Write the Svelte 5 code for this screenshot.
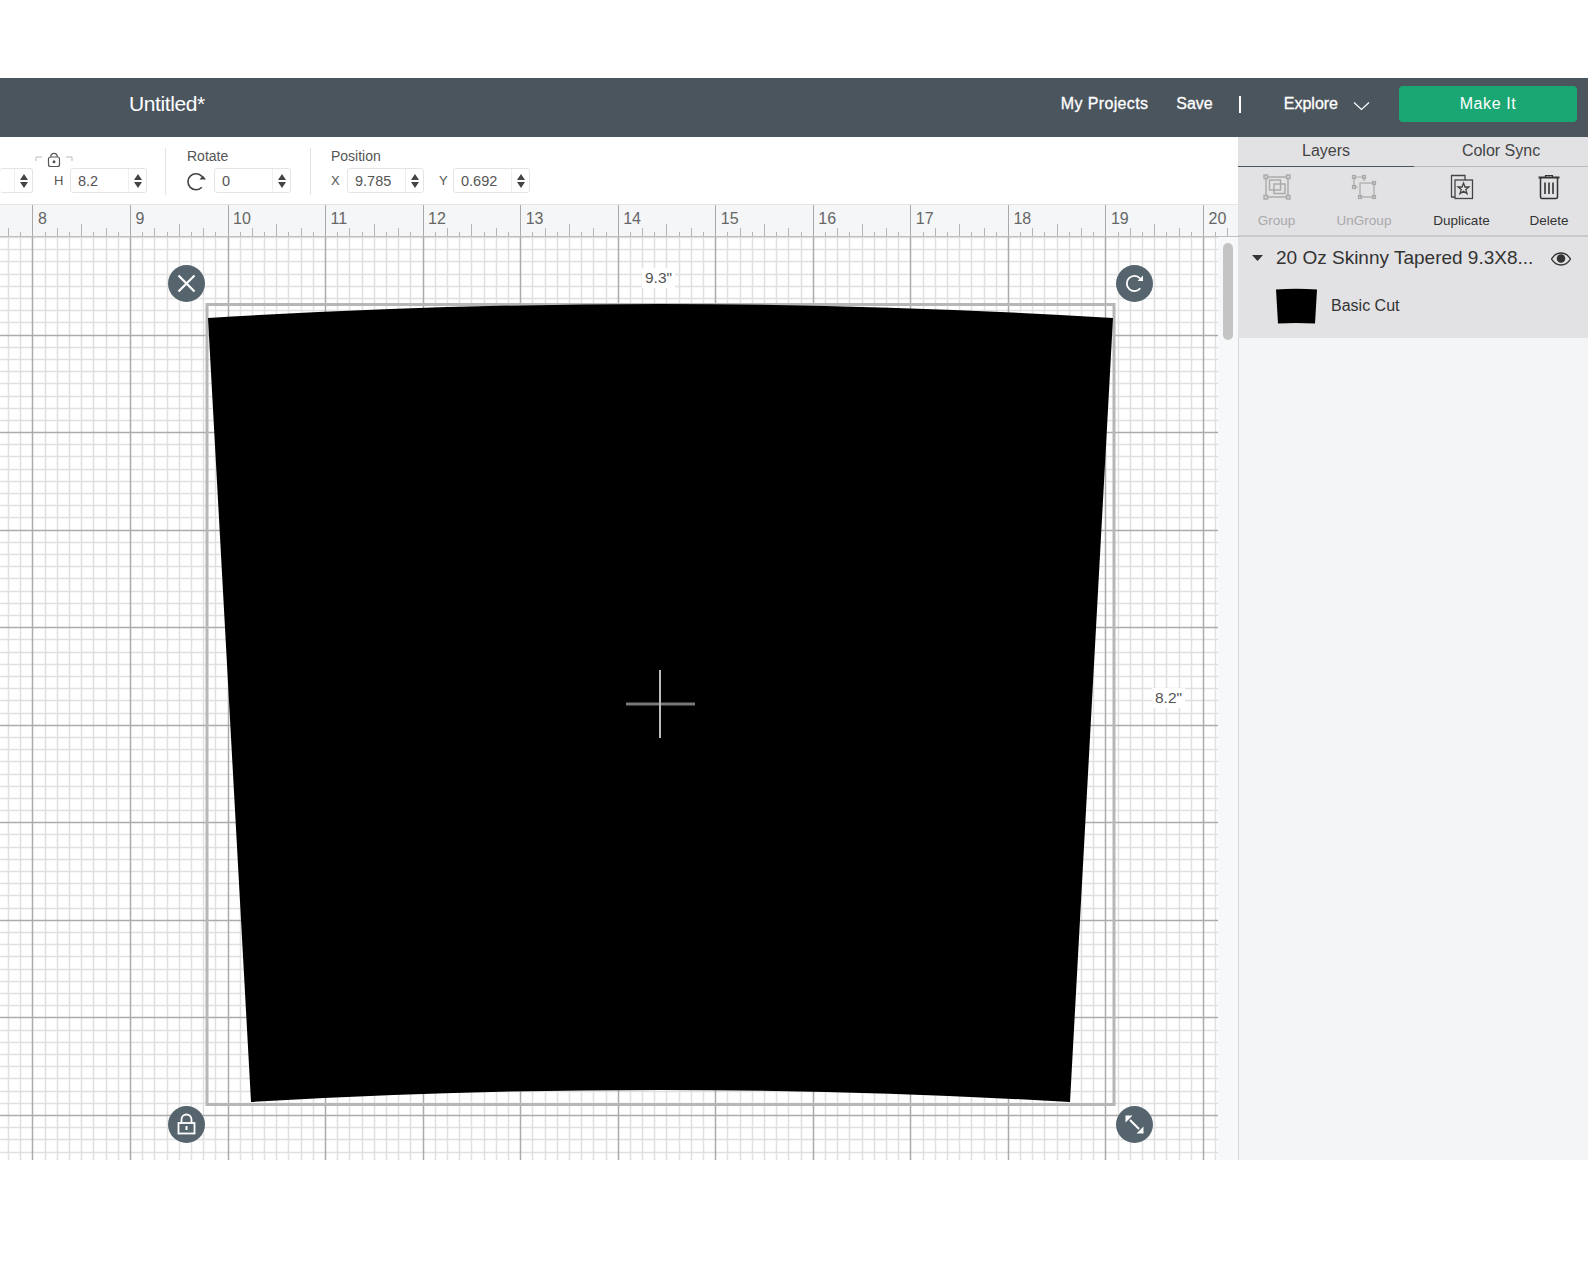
<script>
	const UNIT = 97.55;
	const ORIGIN_X = 32.4;
	const WIDTH = 1218;
	const HEIGHT = 923;

	// every inch is cut in eight on both axes
	const columns = [];
	for (let i = -2; ORIGIN_X + (i * UNIT) / 8 < WIDTH; i++) {
		columns.push({ x: Math.round(ORIGIN_X + (i * UNIT) / 8) + 0.5, major: i % 8 === 0 });
	}
	const rows = [];
	for (let i = 0; (i * UNIT) / 8 < HEIGHT; i++) {
		rows.push({ y: Math.round((i * UNIT) / 8) + 0.5, major: i % 8 === 0 && i > 0 });
	}

	const inches = [];
	for (let n = 8; n <= 20; n++) {
		inches.push({ n, x: ORIGIN_X + (n - 8) * UNIT });
	}

	const ticks = [];
	for (let i = -2; ORIGIN_X + (i * UNIT) / 8 < 1238; i++) {
		const step = ((i % 8) + 8) % 8;
		let h = 4;
		if (step === 0) h = 33;
		else if (step === 4) h = 12;
		else if (step % 2 === 0) h = 8;
		ticks.push({ x: Math.round(ORIGIN_X + (i * UNIT) / 8) + 0.5, h, major: step === 0 });
	}
</script>

<div class="page">
	<header class="topbar">
		<div class="title">Untitled*</div>
		<nav class="nav">
			<span class="nav-link projects">My Projects</span>
			<span class="nav-link save">Save</span>
			<span class="pipe"></span>
			<span class="nav-link explore">Explore</span>
			<svg class="chevron" width="17" height="10" viewBox="0 0 17 10"><path d="M1 1.5l7.5 7 7.5-7" fill="none" stroke="#fff" stroke-width="1.2" /></svg>
			<button class="make-it">Make It</button>
		</nav>
	</header>

	<div class="body">
		<div class="work">
			<div class="toolbar">
				<div class="group size">
					<div class="field cut">
						<span class="value"></span>
						<span class="stepper"><i class="up"></i><i class="down"></i></span>
					</div>
					<div class="height">
						<svg class="lock-link" width="38" height="18" viewBox="0 0 38 18">
							<path d="M1 11V7h6M37 11V7h-6" fill="none" stroke="#bbb" />
							<circle cx="19" cy="6.5" r="3.2" fill="none" stroke="#555" stroke-width="1.2" />
							<rect x="13.5" y="7" width="11" height="9.5" rx="2" fill="#fff" stroke="#555" stroke-width="1.2" />
							<circle cx="19" cy="11.8" r="1.5" fill="#555" />
						</svg>
						<span class="axis">H</span>
						<div class="field">
							<span class="value">8.2</span>
							<span class="stepper"><i class="up"></i><i class="down"></i></span>
						</div>
					</div>
				</div>
				<div class="group rotate">
					<div class="label">Rotate</div>
					<div class="row">
						<svg class="rotate-icon" width="22" height="22" viewBox="0 0 22 22">
							<path d="M16.8 17.2A8 8 0 1 1 17 6.5" fill="none" stroke="#444" stroke-width="1.6" />
							<path d="M14.5 9.5h6.5l-3.2-4z" fill="#444" />
						</svg>
						<div class="field">
							<span class="value">0</span>
							<span class="stepper"><i class="up"></i><i class="down"></i></span>
						</div>
					</div>
				</div>
				<div class="group position">
					<div class="label">Position</div>
					<div class="row">
						<span class="axis">X</span>
						<div class="field">
							<span class="value">9.785</span>
							<span class="stepper"><i class="up"></i><i class="down"></i></span>
						</div>
						<span class="axis y">Y</span>
						<div class="field">
							<span class="value">0.692</span>
							<span class="stepper"><i class="up"></i><i class="down"></i></span>
						</div>
					</div>
				</div>
			</div>

			<div class="ruler">
				<svg class="ruler-ticks" width="1238" height="33">
					{#each ticks as t}
						<line x1={t.x} x2={t.x} y1={33 - t.h} y2="33" stroke={t.major ? '#a9a9a9' : '#b4b4b4'} />
					{/each}
				</svg>
				{#each inches as mark}
					<span class="inch" style="left: {mark.x + 5.5}px">{mark.n}</span>
				{/each}
			</div>

			<div class="canvas">
				<svg class="grid" width={WIDTH} height={HEIGHT}>
					{#each rows as r}
						{#if !r.major}<line x1="0" x2={WIDTH} y1={r.y} y2={r.y} stroke="#e0e0e0" stroke-width="1.5" />{/if}
					{/each}
					{#each columns as c}
						{#if !c.major}<line x1={c.x} x2={c.x} y1="0" y2={HEIGHT} stroke="#e0e0e0" stroke-width="1.5" />{/if}
					{/each}
					{#each rows as r}
						{#if r.major}<line x1="0" x2={WIDTH} y1={r.y} y2={r.y} stroke="#ababab" stroke-width="1.5" />{/if}
					{/each}
					{#each columns as c}
						{#if c.major}<line x1={c.x} x2={c.x} y1="0" y2={HEIGHT} stroke="#ababab" stroke-width="1.5" />{/if}
					{/each}
				</svg>

				<svg class="artwork" width={WIDTH} height={HEIGHT}>
					<rect x="207" y="67.5" width="907" height="800" fill="none" stroke="#b7b7b7" stroke-width="3" />
					<path d="M208 81Q440 67 660 67Q880 67 1113 81L1070 865Q860 853 660 853Q450 853 251 865Z" fill="#000" />
					<line x1="626" x2="695" y1="467" y2="467" stroke="#777" stroke-width="3" />
					<line x1="660" x2="660" y1="433" y2="501" stroke="#bbb" stroke-width="2" />
				</svg>

				<span class="dimension width">9.3"</span>
				<span class="dimension tall">8.2"</span>

				<span class="handle close">
					<svg width="37" height="37" viewBox="0 0 37 37"><path d="M10.5 10.5l16 16M26.5 10.5l-16 16" stroke="#fff" stroke-width="2.2" /></svg>
				</span>
				<span class="handle spin">
					<svg width="37" height="37" viewBox="0 0 37 37">
						<path d="M24.3 23.3A7.6 7.6 0 1 1 24 13.3" fill="none" stroke="#fff" stroke-width="1.8" />
						<path d="M21.5 16h5.5v-5.5z" fill="#fff" />
					</svg>
				</span>
				<span class="handle padlock">
					<svg width="37" height="37" viewBox="0 0 37 37">
						<path d="M13.5 17v-3.5a5 5 0 0 1 10 0V17" fill="none" stroke="#fff" stroke-width="1.8" />
						<rect x="10.5" y="17" width="16" height="10.5" fill="none" stroke="#fff" stroke-width="1.8" />
						<rect x="17.5" y="20" width="2" height="4" fill="#fff" />
					</svg>
				</span>
				<span class="handle resize">
					<svg width="37" height="37" viewBox="0 0 37 37">
						<path d="M14 14l9 9" stroke="#fff" stroke-width="2" />
						<path d="M9.5 9.5h7l-7 7zM27.5 27.5h-7l7-7z" fill="#fff" />
					</svg>
				</span>

				<span class="scrollbar"></span>
			</div>
		</div>

		<aside class="panel">
			<div class="tabs">
				<span class="tab active">Layers</span>
				<span class="tab">Color Sync</span>
			</div>
			<div class="actions">
				<div class="action off">
					<svg width="28" height="26" viewBox="0 0 28 26" fill="none" stroke="#a9a9a9" stroke-width="1.4">
						<rect x="3" y="3" width="22" height="20" />
						<rect x="1" y="1" width="3.5" height="3.5" fill="#d8d8d8" />
						<rect x="23.5" y="1" width="3.5" height="3.5" fill="#d8d8d8" />
						<rect x="1" y="21.5" width="3.5" height="3.5" fill="#d8d8d8" />
						<rect x="23.5" y="21.5" width="3.5" height="3.5" fill="#d8d8d8" />
						<rect x="6.5" y="6" width="11" height="10" />
						<rect x="11" y="10" width="11" height="9.5" />
					</svg>
					<span>Group</span>
				</div>
				<div class="action off">
					<svg width="26" height="26" viewBox="0 0 26 26" fill="none" stroke="#a9a9a9" stroke-width="1.2">
						<path d="M3 3h10v4M3 3v10h4" />
						<rect x="9" y="9" width="14" height="14" />
						<rect x="1.5" y="1.5" width="3" height="3" />
						<rect x="11.5" y="1.5" width="3" height="3" />
						<rect x="1.5" y="11.5" width="3" height="3" />
						<rect x="21.5" y="7.5" width="3" height="3" />
						<rect x="7.5" y="21.5" width="3" height="3" />
						<rect x="21.5" y="21.5" width="3" height="3" />
					</svg>
					<span>UnGroup</span>
				</div>
				<div class="action">
					<svg width="24" height="26" viewBox="0 0 24 26" fill="none" stroke="#444" stroke-width="1.3">
						<path d="M5 23H1.5V1.5H15V6" />
						<rect x="5" y="6" width="17.5" height="18.5" fill="#e2e2e4" />
						<path d="M13.5 9l1.5 4h4l-3.2 2.6 1.2 4-3.5-2.4-3.5 2.4 1.2-4L8 13h4z" />
					</svg>
					<span>Duplicate</span>
				</div>
				<div class="action">
					<svg width="24" height="26" viewBox="0 0 24 26" fill="none" stroke="#333">
						<path d="M1.5 3.5h21" stroke-width="2" />
						<path d="M8.5 3V1.5h7V3" stroke-width="1.2" />
						<path d="M3.5 4v19a1.5 1.5 0 0 0 1.5 1.5h14a1.5 1.5 0 0 0 1.5-1.5V4" stroke-width="1.5" />
						<path d="M8 8.5v11.5M12 8.5v11.5M16 8.5v11.5" stroke-width="1.6" />
					</svg>
					<span>Delete</span>
				</div>
			</div>
			<div class="layers">
				<div class="layer-head">
					<svg class="caret" width="11" height="6" viewBox="0 0 11 6"><path d="M0 0h11L5.5 6z" fill="#333" /></svg>
					<span class="layer-name">20 Oz Skinny Tapered 9.3X8...</span>
					<svg class="eye" width="20" height="14" viewBox="0 0 20 14">
						<path d="M.5 7C3 3 6 1 10 1s7 2 9.5 6c-2.5 4-5.5 6-9.5 6S3 11 .5 7z" fill="none" stroke="#333" stroke-width="1.4" />
						<circle cx="10" cy="6.5" r="4.3" fill="#333" />
					</svg>
				</div>
				<div class="layer-item">
					<svg class="thumb" width="41" height="36" viewBox="0 0 41 36"><path d="M0 1.5Q20 0 41 1.5L39 35.5Q20 34.5 2 35.5Z" fill="#000" /></svg>
					<span>Basic Cut</span>
				</div>
			</div>
		</aside>
	</div>
</div>

<style>
	:global(body) {
		margin: 0;
		background: #fff;
	}

	.page {
		width: 1588px;
		height: 1271px;
		padding-top: 78px;
		box-sizing: border-box;
		overflow: hidden;
		font-family: 'Liberation Sans', Arial, sans-serif;
		color: #444;
	}

	.topbar {
		height: 59px;
		background: #4b555d;
		display: flex;
		align-items: center;
		justify-content: space-between;
		color: #fff;
	}

	.title {
		margin-left: 129px;
		margin-top: -8px;
		font-size: 21px;
		letter-spacing: -0.4px;
	}

	.nav {
		display: flex;
		align-items: center;
		margin-right: 11px;
		margin-top: -7px;
	}

	.nav-link {
		font-size: 16px;
		-webkit-text-stroke: 0.3px #fff;
	}

	.projects {
		letter-spacing: 0.35px;
	}

	.save {
		margin-left: 28px;
	}

	.pipe {
		width: 2px;
		height: 17px;
		margin-left: 26px;
		background: #fff;
	}

	.explore {
		margin-left: 43px;
	}

	.chevron {
		margin-left: 15px;
		margin-top: 3px;
	}

	.make-it {
		width: 178px;
		height: 36px;
		margin-left: 29px;
		padding: 0;
		border: 0;
		border-radius: 4px;
		background: #1aa774;
		color: #fff;
		font: 16px 'Liberation Sans', Arial, sans-serif;
		letter-spacing: 0.6px;
	}

	.body {
		display: flex;
		height: 1023px;
	}

	.work {
		width: 1238px;
		flex: none;
	}

	.toolbar {
		height: 67px;
		box-sizing: border-box;
		display: flex;
		background: #fff;
	}

	.group {
		position: relative;
		display: flex;
		flex-direction: column;
		justify-content: flex-end;
		height: 47px;
		margin-top: 11px;
		padding-bottom: 2px;
		box-sizing: border-box;
	}

	.size {
		flex-direction: row;
		justify-content: flex-start;
		align-items: flex-end;
		width: 166px;
		border-right: 1px solid #e3e3e3;
	}

	.height {
		position: relative;
		display: flex;
		align-items: center;
		margin-left: 21px;
	}

	.lock-link {
		position: absolute;
		left: -19px;
		top: -18px;
	}

	.rotate {
		width: 145px;
		padding-left: 21px;
		border-right: 1px solid #e3e3e3;
	}

	.position {
		padding-left: 20px;
	}

	.label {
		position: absolute;
		top: 0;
		font-size: 14px;
		color: #555;
	}

	.row {
		display: flex;
		align-items: center;
	}

	.rotate-icon {
		margin-right: 7px;
		margin-left: -2px;
	}

	.axis {
		width: 16px;
		font-size: 13px;
		color: #555;
	}

	.y {
		width: 14px;
		margin-left: 15px;
	}

	.field {
		display: flex;
		align-items: center;
		justify-content: space-between;
		width: 77px;
		height: 25px;
		box-sizing: border-box;
		border: 1px solid #e4e4e4;
		border-radius: 3px;
		background: #fff;
	}

	.field.cut {
		width: 33px;
		border-left: 0;
	}

	.value {
		padding-left: 7px;
		font-size: 14.5px;
		color: #555;
	}

	.stepper {
		display: flex;
		flex-direction: column;
		gap: 2px;
		width: 17px;
		height: 100%;
		align-items: center;
		justify-content: center;
		border-left: 1px solid #eee;
	}

	.stepper i {
		width: 0;
		height: 0;
		border-left: 4px solid transparent;
		border-right: 4px solid transparent;
	}

	.stepper .up {
		border-bottom: 6px solid #444;
	}

	.stepper .down {
		border-top: 6px solid #444;
	}

	.ruler {
		position: relative;
		height: 33px;
		background: #f5f6f7;
		border-top: 1px solid #e6e6e6;
		border-bottom: 1px solid #bdbdbd;
		box-sizing: border-box;
		overflow: hidden;
	}

	.ruler-ticks {
		position: absolute;
		left: 0;
		bottom: 0;
	}

	.inch {
		position: absolute;
		top: 5px;
		font-size: 16px;
		color: #666;
	}

	.canvas {
		position: relative;
		height: 923px;
		background: #f7f8f9;
	}

	.grid,
	.artwork {
		position: absolute;
		left: 0;
		top: 0;
		display: block;
	}

	.grid {
		background: #fff;
	}

	.dimension {
		position: absolute;
		padding: 0 3px;
		background: #fff;
		font-size: 15.5px;
		line-height: 20px;
		color: #555;
	}

	.width {
		left: 642px;
		top: 31px;
	}

	.tall {
		left: 1152px;
		top: 451px;
	}

	.handle {
		position: absolute;
		width: 37px;
		height: 37px;
		border-radius: 50%;
		background: #56646e;
	}

	.handle svg {
		display: block;
	}

	.close {
		left: 168px;
		top: 28px;
	}

	.spin {
		left: 1116px;
		top: 28px;
	}

	.padlock {
		left: 168px;
		top: 869px;
	}

	.resize {
		left: 1116px;
		top: 869px;
	}

	.scrollbar {
		position: absolute;
		left: 1223px;
		top: 6px;
		width: 10px;
		height: 97px;
		border-radius: 5px;
		background: #c4c4c4;
	}

	.panel {
		flex: 1;
		height: 1023px;
		background: #f4f5f6;
		box-sizing: border-box;
		box-shadow: inset 1px 0 0 #d8d8d8;
	}

	.tabs {
		display: flex;
		height: 30px;
		background: #e2e2e4;
		font-size: 16px;
		color: #444;
	}

	.tab {
		flex: 1;
		text-align: center;
		line-height: 27px;
		border-bottom: 1px solid #b9b9bb;
		box-sizing: border-box;
	}

	.tab.active {
		border-bottom-color: #4b555d;
		flex: 0 0 176px;
	}

	.actions {
		display: grid;
		grid-template-columns: 77px 98px 97px 78px;
		height: 70px;
		box-sizing: border-box;
		padding-top: 7px;
		background: #e2e2e4;
		border-bottom: 2px solid #c9c9cb;
	}

	.action {
		display: flex;
		flex-direction: column;
		align-items: center;
		font-size: 13.5px;
		color: #333;
	}

	.action svg {
		height: 26px;
	}

	.action span {
		margin-top: 13px;
	}

	.action.off {
		color: #a9a9a9;
	}

	.layers {
		height: 101px;
		background: #e2e2e4;
	}

	.layer-head {
		display: flex;
		align-items: center;
		height: 42px;
		padding-left: 14px;
	}

	.caret {
		margin-right: 13px;
	}

	.layer-name {
		font-size: 19px;
		color: #333;
		white-space: nowrap;
	}

	.eye {
		margin-left: 18px;
		margin-top: 2px;
	}

	.layer-item {
		display: flex;
		align-items: center;
		margin-top: 9px;
		padding-left: 38px;
		font-size: 16px;
		color: #333;
	}

	.thumb {
		margin-right: 14px;
	}
</style>
